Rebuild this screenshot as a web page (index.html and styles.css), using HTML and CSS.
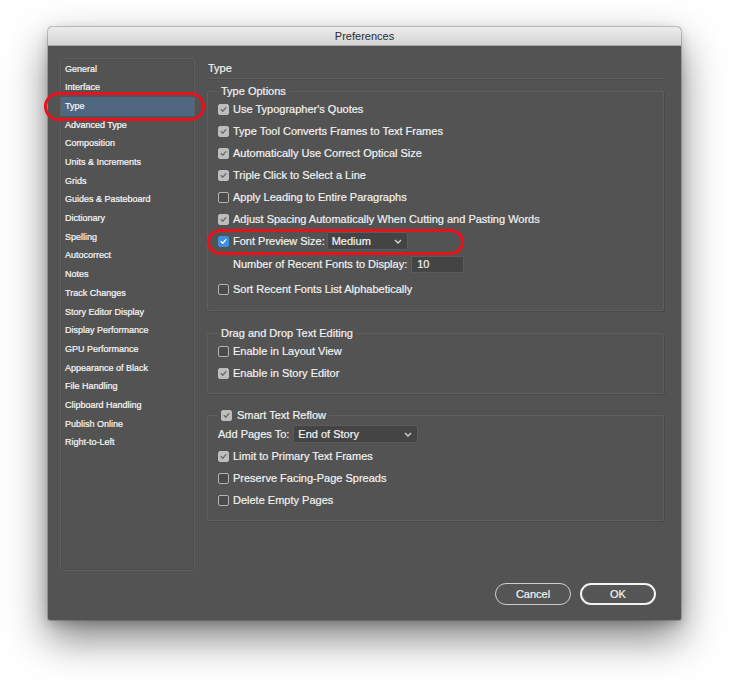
FILE: index.html
```html
<!DOCTYPE html>
<html>
<head>
<meta charset="utf-8">
<title>Preferences</title>
<link rel="stylesheet" href="styles.css">
</head>
<body>
<div class="window">
  <div class="titlebar">Preferences</div>
  <div class="content">
    <ul class="sidebar">
      <li>General</li>
      <li>Interface</li>
      <li class="selected">Type<span class="ring ring-side"></span></li>
      <li>Advanced Type</li>
      <li>Composition</li>
      <li>Units &amp; Increments</li>
      <li>Grids</li>
      <li>Guides &amp; Pasteboard</li>
      <li>Dictionary</li>
      <li>Spelling</li>
      <li>Autocorrect</li>
      <li>Notes</li>
      <li>Track Changes</li>
      <li>Story Editor Display</li>
      <li>Display Performance</li>
      <li>GPU Performance</li>
      <li>Appearance of Black</li>
      <li>File Handling</li>
      <li>Clipboard Handling</li>
      <li>Publish Online</li>
      <li>Right-to-Left</li>
    </ul>
    <div class="main">
      <div class="heading">Type</div>

      <fieldset class="group g1">
        <legend>Type Options</legend>
        <div class="row"><span class="cb on"><svg viewBox="0 0 11 11"><path d="M2.6 5.6 L4.6 7.6 L8.4 3.2"/></svg></span>Use Typographer's Quotes</div>
        <div class="row"><span class="cb on"><svg viewBox="0 0 11 11"><path d="M2.6 5.6 L4.6 7.6 L8.4 3.2"/></svg></span>Type Tool Converts Frames to Text Frames</div>
        <div class="row"><span class="cb on"><svg viewBox="0 0 11 11"><path d="M2.6 5.6 L4.6 7.6 L8.4 3.2"/></svg></span>Automatically Use Correct Optical Size</div>
        <div class="row"><span class="cb on"><svg viewBox="0 0 11 11"><path d="M2.6 5.6 L4.6 7.6 L8.4 3.2"/></svg></span>Triple Click to Select a Line</div>
        <div class="row"><span class="cb"></span>Apply Leading to Entire Paragraphs</div>
        <div class="row"><span class="cb on"><svg viewBox="0 0 11 11"><path d="M2.6 5.6 L4.6 7.6 L8.4 3.2"/></svg></span>Adjust Spacing Automatically When Cutting and Pasting Words</div>
        <div class="row preview"><span class="cb blue"><svg viewBox="0 0 11 11"><path d="M2.6 5.6 L4.6 7.6 L8.4 3.2"/></svg></span>Font Preview Size:<span class="select sel-medium">Medium<svg class="chev" viewBox="0 0 8 5"><path d="M1 1 L4 4 L7 1"/></svg></span><span class="ring ring-preview"></span></div>
        <div class="row indent recent">Number of Recent Fonts to Display:<span class="input">10</span></div>
        <div class="row sort"><span class="cb"></span>Sort Recent Fonts List Alphabetically</div>
      </fieldset>

      <fieldset class="group g2">
        <legend>Drag and Drop Text Editing</legend>
        <div class="row"><span class="cb"></span>Enable in Layout View</div>
        <div class="row"><span class="cb on"><svg viewBox="0 0 11 11"><path d="M2.6 5.6 L4.6 7.6 L8.4 3.2"/></svg></span>Enable in Story Editor</div>
      </fieldset>

      <fieldset class="group g3">
        <legend class="check-legend"><span class="cb on"><svg viewBox="0 0 11 11"><path d="M2.6 5.6 L4.6 7.6 L8.4 3.2"/></svg></span>Smart Text Reflow</legend>
        <div class="row addpages">Add Pages To:<span class="select sel-pages">End of Story<svg class="chev" viewBox="0 0 8 5"><path d="M1 1 L4 4 L7 1"/></svg></span></div>
        <div class="row"><span class="cb on"><svg viewBox="0 0 11 11"><path d="M2.6 5.6 L4.6 7.6 L8.4 3.2"/></svg></span>Limit to Primary Text Frames</div>
        <div class="row"><span class="cb"></span>Preserve Facing-Page Spreads</div>
        <div class="row"><span class="cb"></span>Delete Empty Pages</div>
      </fieldset>
    </div>
  </div>
  <div class="footer">
    <button class="btn">Cancel</button>
    <button class="btn ok">OK</button>
  </div>
</div>
</body>
</html>
```

FILE: styles.css
```css
* { box-sizing: border-box; }

html, body {
  margin: 0;
  padding: 0;
  background: #ffffff;
}

body {
  min-height: 689px;
  padding-top: 27px;
  font-family: "Liberation Sans", Arial, sans-serif;
  font-size: 11px;
  color: #f2f2f2;
}

.window {
  margin: 0 0 0 48px;
  width: 633px;
  height: 593px;
  background: #535353;
  border-radius: 4px 4px 2px 2px;
  box-shadow: 0 18px 40px rgba(0, 0, 0, 0.5), 0 4px 12px rgba(0, 0, 0, 0.2), 0 0 0 1px rgba(0, 0, 0, 0.18);
  display: flex;
  flex-direction: column;
  -webkit-text-stroke: 0.2px #f2f2f2;
}

.titlebar {
  height: 19px;
  flex: none;
  background: linear-gradient(#ececec, #d4d4d4);
  border-bottom: 1px solid #a9a9a9;
  border-radius: 4px 4px 0 0;
  color: #2b2b2b;
  text-align: center;
  line-height: 19px;
  font-size: 11px;
  -webkit-text-stroke: 0;
}

.content {
  display: grid;
  grid-template-columns: 135px 457px;
  column-gap: 12px;
  padding: 12px 0 0 12px;
  height: 525px;
  flex: none;
}

.sidebar {
  list-style: none;
  margin: 0;
  padding: 0.6px 0 0 0;
  height: 513px;
  border: 1px solid #5e5e5e;
  border-radius: 3px;
  box-shadow: inset 0 0 0 1px #4e4e4e;
}

.sidebar li {
  position: relative;
  height: 18.7px;
  line-height: 18.7px;
  padding-left: 4px;
  font-size: 9px;
  color: #f6f6f6;
  -webkit-text-stroke: 0.22px #f6f6f6;
}

.sidebar li.selected {
  background: #4f6781;
}

.ring {
  position: absolute;
  border: 3px solid #e8121c;
  border-radius: 15px;
  pointer-events: none;
}

.ring-side {
  left: -17px;
  top: -5px;
  width: 161px;
  height: 29px;
}

.main {
  display: flex;
  flex-direction: column;
}

.heading {
  height: 21px;
  line-height: 21px;
  padding-left: 1px;
  border-bottom: 1px solid #5f5f5f;
  box-shadow: 0 1px 0 #4b4b4b;
  font-size: 11px;
}

.group {
  margin: 0;
  padding: 0 10px 10px 10px;
  border: 1px solid #5f5f5f;
  border-radius: 2px;
  box-shadow: 1px 1px 0 #4a4a4a;
  min-width: 0;
}

.group legend {
  padding: 0 3px;
  line-height: 13px;
  font-size: 11px;
}

.g1 { margin-top: 6px; }
.g2 { margin-top: 16px; padding-bottom: 9px; }
.g3 { margin-top: 15px; padding-bottom: 9px; }

.check-legend {
  display: flex;
  align-items: center;
}

.check-legend .cb {
  margin-right: 5px;
}

.row {
  position: relative;
  height: 22px;
  display: flex;
  align-items: center;
  white-space: nowrap;
}

.indent { padding-left: 15px; }
.recent { margin-top: 1px; }
.sort { margin-top: 3px; }
.addpages { margin-top: 1px; }

.cb {
  width: 11px;
  height: 11px;
  flex: none;
  margin-right: 4px;
  border: 1px solid #b4b4b4;
  border-radius: 2px;
  background: #4a4a4a;
  display: inline-flex;
}

.cb svg {
  width: 100%;
  height: 100%;
  fill: none;
  stroke-width: 1.6;
  stroke-linecap: round;
  stroke-linejoin: round;
}

.cb.on {
  background: #bdbdbd;
  border-color: #bdbdbd;
}

.cb.on svg { stroke: #6c6c6c; }

.cb.blue {
  background: #3f8fe0;
  border-color: #3f8fe0;
}

.cb.blue svg { stroke: #ffffff; }

.select {
  display: inline-flex;
  align-items: center;
  justify-content: space-between;
  height: 18px;
  padding: 0 5px 0 4px;
  background: #444444;
  border: 1px solid #5b5b5b;
  border-radius: 2px;
  color: #f4f4f4;
}

.sel-medium {
  width: 81px;
  margin-left: 2px;
}

.sel-pages {
  width: 125px;
  margin-left: 4px;
}

.chev {
  width: 8px;
  height: 5px;
  fill: none;
  stroke: #d8d8d8;
  stroke-width: 1.3;
}

.input {
  display: inline-flex;
  align-items: center;
  width: 53px;
  height: 17px;
  margin-left: 4px;
  padding-left: 5px;
  background: #444444;
  border: 1px solid #5b5b5b;
  color: #f4f4f4;
}

.ring-preview {
  left: -11px;
  top: -1px;
  width: 257px;
  height: 26px;
}

.footer {
  display: flex;
  justify-content: flex-end;
  gap: 9px;
  padding: 12px 25px 0 0;
}

.btn {
  width: 76px;
  height: 22px;
  border-radius: 11px;
  border: 1px solid #cfcfcf;
  background: #555555;
  color: #f4f4f4;
  font-family: "Liberation Sans", Arial, sans-serif;
  font-size: 11px;
  padding: 0;
  -webkit-text-stroke: 0.2px #f4f4f4;
}

.btn.ok {
  border: 2px solid #f2f2f2;
}
```
